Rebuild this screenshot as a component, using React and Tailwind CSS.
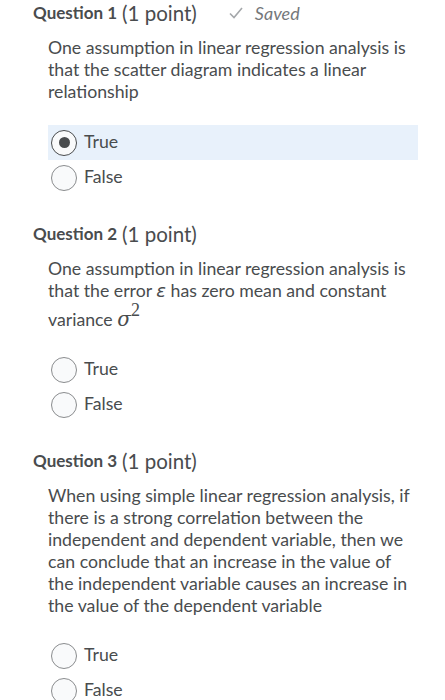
import React from 'react';

const Radio = ({ checked }) => (
  <span
    className={`flex h-[26px] w-[26px] shrink-0 items-center justify-center rounded-full border bg-[#f9fafb] ${
      checked ? 'border-[#494c4e] border-[1.5px]' : 'border-[#8a8c8e]'
    }`}
  >
    {checked && <span className="h-[11px] w-[11px] rounded-full bg-[#494c4e]" />}
  </span>
);

const Option = ({ label, checked }) => (
  <div className={`flex h-[35px] items-center gap-[7px] pl-[3px] ${checked ? 'bg-[#e8f1fb]' : ''}`}>
    <Radio checked={checked} />
    <span className="text-[17.7px] text-[#494c4e]">{label}</span>
  </div>
);

const Question = ({ num, saved, children, selected, gapAfterBody = 'mt-[22px]' }) => (
  <div>
    <div className="flex h-[26px] items-center pl-[33px] text-[#494c4e]">
      <span className="text-[17px] font-bold">Question {num}</span>
      <span className="ml-[5px] text-[20.5px]">(1 point)</span>
      {saved && (
        <span className="ml-[32px] flex items-center gap-[12px] text-[#75787b]">
          <svg width="14" height="12" viewBox="0 0 14 12" fill="none">
            <path d="M1 6.5 L5 10.5 L13 1" stroke="#a4a7aa" strokeWidth="1.6" />
          </svg>
          <span className="text-[18px] italic">Saved</span>
        </span>
      )}
    </div>
    <div className="mt-[11px] pl-[48px] pr-[27px] text-[17.7px] leading-[22px] text-[#494c4e]">{children}</div>
    <div className={`${gapAfterBody} ml-[48px] mr-[27px]`}>
      <Option label="True" checked={selected === 'True'} />
      <Option label="False" checked={selected === 'False'} />
    </div>
  </div>
);

export default function App() {
  return (
    <div className="min-h-[700px] bg-white pt-0 font-['Lato',sans-serif]">
      <Question num={1} saved selected="True">
        One assumption in linear regression analysis is that the scatter diagram indicates a linear relationship
      </Question>
      <div className="h-[26px]" />
      <Question num={2} gapAfterBody="mt-[21px]">
        One assumption in linear regression analysis is that the error{' '}
        <span className="font-['DejaVu_Sans',sans-serif] text-[18px] italic">ε</span> has zero mean and constant
        variance{' '}
        <span className="inline-block pt-[6px] leading-[22px]">
          <span className="font-['DejaVu_Serif',serif] text-[20px] italic">σ</span>
          <span className="relative -top-[10px] font-['Liberation_Serif',serif] text-[18px]">2</span>
        </span>
      </Question>
      <div className="h-[26px]" />
      <Question num={3} gapAfterBody="mt-[21px]">
        When using simple linear regression analysis, if there is a strong correlation between the independent and
        dependent variable, then we can conclude that an increase in the value of the independent variable causes an
        increase in the value of the dependent variable
      </Question>
    </div>
  );
}
